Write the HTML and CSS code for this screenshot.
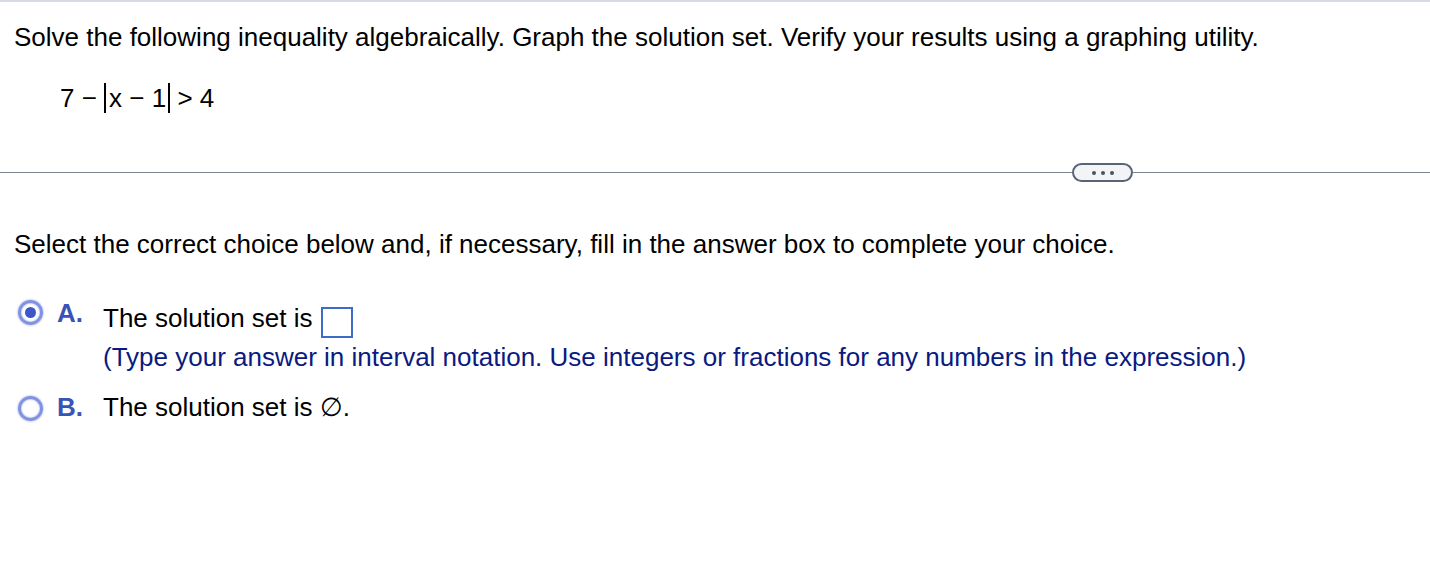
FILE: index.html
```html
<!DOCTYPE html>
<html lang="en">
<head>
<meta charset="utf-8">
<title>Question</title>
<link rel="stylesheet" href="styles.css">
</head>
<body>
<div class="page">
  <section class="question">
    <p class="prompt">Solve the following inequality algebraically. Graph the solution set. Verify your results using a graphing utility.</p>
    <div class="equation">7 <span class="op">−</span> <span class="abs">x <span class="op">−</span> 1</span> <span class="op">&gt;</span> 4</div>
  </section>
  <div class="divider">
    <span class="divider-line"></span>
    <button class="more" type="button" aria-label="More">
      <span class="dot"></span><span class="dot"></span><span class="dot"></span>
    </button>
    <span class="divider-line short"></span>
  </div>
  <section class="answer">
    <p class="instruction">Select the correct choice below and, if necessary, fill in the answer box to complete your choice.</p>
    <div class="choice choice-a">
      <span class="radio checked"></span>
      <span class="label">A.</span>
      <div class="content">
        <div class="line-a">The solution set is <span class="answer-box"></span></div>
        <div class="hint">(Type your answer in interval notation. Use integers or fractions for any numbers in the expression.)</div>
      </div>
    </div>
    <div class="choice choice-b">
      <span class="radio"></span>
      <span class="label">B.</span>
      <div class="content">
        <div>The solution set is ∅.</div>
      </div>
    </div>
  </section>
</div>
</body>
</html>
```
FILE: styles.css
```css
html, body {
  margin: 0;
  padding: 0;
  background: #ffffff;
}
body {
  font-family: "Liberation Sans", Arial, sans-serif;
  font-size: 26px;
  line-height: 30px;
  color: #000000;
}
.page {
  border-top: 2px solid #d5dae3;
  width: 1430px;
  height: 586px;
  overflow: hidden;
}
.question {
  padding: 0 14px;
}
.prompt {
  margin: 20px 0 0;
  white-space: nowrap;
}
.equation {
  margin: 31px 0 0 46px;
  height: 30px;
  white-space: nowrap;
}
.abs {
  display: inline-block;
  border-left: 2px solid #000;
  border-right: 2px solid #000;
  padding: 0 2px 0 3px;
  line-height: 30px;
}
.divider {
  display: flex;
  align-items: center;
  margin-top: 50px;
  height: 19px;
}
.divider-line {
  flex: 1;
  height: 1px;
  background: #7c8594;
}
.divider-line.short {
  flex: 0 0 297px;
}
.more {
  flex: 0 0 auto;
  width: 61px;
  height: 19px;
  margin: 0;
  padding: 0;
  border: 2px solid #5a6477;
  border-radius: 10px;
  background: #f3f4f6;
  display: flex;
  align-items: center;
  justify-content: center;
  gap: 5px;
}
.dot {
  width: 4px;
  height: 4px;
  border-radius: 50%;
  background: #4a5263;
}
.answer {
  padding: 0 14px;
}
.instruction {
  margin: 47px 0 0;
  white-space: nowrap;
}
.choice {
  display: flex;
  align-items: flex-start;
}
.choice-a {
  margin-top: 39px;
}
.choice-b {
  margin-top: 20px;
}
.radio {
  flex: 0 0 auto;
  position: relative;
  box-sizing: border-box;
  width: 25px;
  height: 25px;
  margin: 2px 0 0 4px;
  border: 3px solid #8192e0;
  border-radius: 50%;
  box-shadow: 0 0 1.5px 0.5px rgba(120, 138, 222, 0.6), inset 0 0 1.5px 0.5px rgba(120, 138, 222, 0.5);
}
.choice-b .radio {
  margin-top: 4px;
}
.radio.checked::after {
  content: "";
  position: absolute;
  left: 4px;
  top: 4px;
  width: 11px;
  height: 11px;
  border-radius: 50%;
  background: #3d57c9;
}
.label {
  flex: 0 0 auto;
  width: 46px;
  margin-left: 14px;
  font-weight: bold;
  color: #3a53b6;
}
.choice-a .content {
  margin-top: 5px;
}
.content {
  white-space: nowrap;
}
.answer-box {
  display: inline-block;
  box-sizing: border-box;
  width: 32px;
  height: 31px;
  border: 2px solid #3d6bc8;
  vertical-align: -11px;
  margin-left: 1px;
}
.hint {
  color: #0a1a80;
  margin-top: 4px;
}
```
